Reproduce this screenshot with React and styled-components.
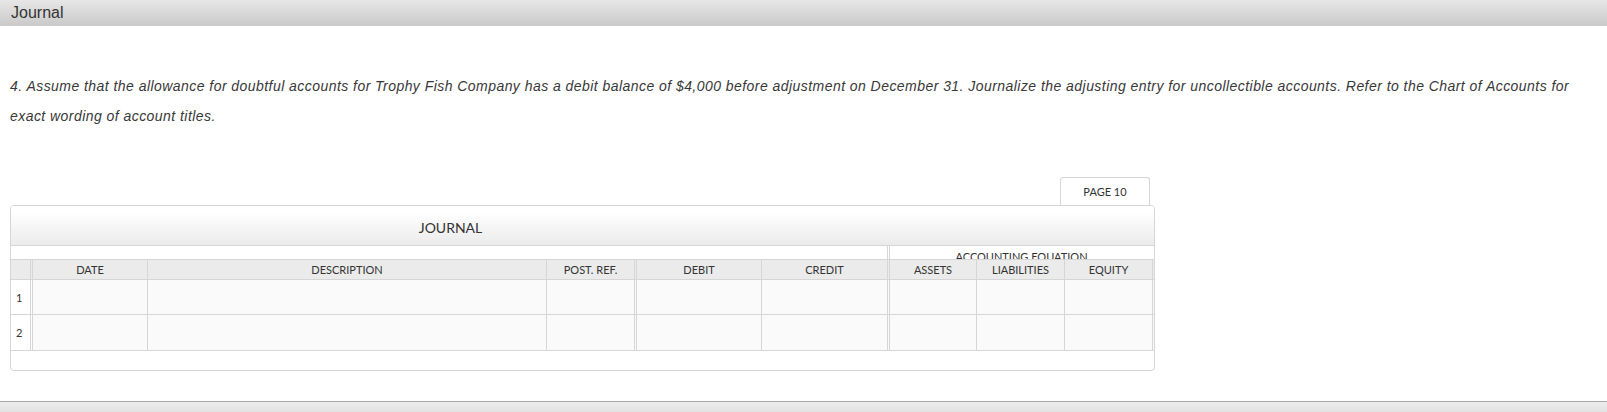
import React from "react";
import styled, { createGlobalStyle } from "styled-components";

const GlobalStyle = createGlobalStyle`
  html, body {
    margin: 0;
    padding: 0;
    background: #ffffff;
  }
  body {
    width: 1607px;
    font-family: "Liberation Sans", Arial, sans-serif;
    color: #333333;
  }
`;

const columns = [
  { key: "num", label: "", width: 22, double: true },
  { key: "date", label: "DATE", width: 115 },
  { key: "desc", label: "DESCRIPTION", width: 399 },
  { key: "post", label: "POST. REF.", width: 90, double: true },
  { key: "debit", label: "DEBIT", width: 125 },
  { key: "credit", label: "CREDIT", width: 128, double: true },
  { key: "assets", label: "ASSETS", width: 87 },
  { key: "liab", label: "LIABILITIES", width: 88 },
  { key: "equity", label: "EQUITY", width: 88 },
];

const gridTemplate = columns.map((c) => `${c.width}px`).join(" ");

//Page chrome
const TopBar = styled.div`
  height: 26px;
  background: linear-gradient(#e7e7e7, #c9c9c9);
  display: flex;
  align-items: center;
  padding-left: 11px;
  font-size: 16px;
  color: #333333;
`;

const Content = styled.div`
  padding: 0 17px 0 10px;
`;

const Question = styled.p`
  margin: 45px 0 0;
  font-size: 14px;
  font-style: italic;
  letter-spacing: 0.45px;
  line-height: 30px;
  color: #383838;
`;

const TabRow = styled.div`
  display: flex;
  justify-content: flex-end;
  width: 1145px;
  margin-top: 46px;
`;

const PageTab = styled.div`
  width: 88px;
  height: 27px;
  margin-right: 5px;
  border: 1px solid #d6d6d6;
  border-bottom: none;
  border-radius: 3px 3px 0 0;
  background: #ffffff;
  display: flex;
  align-items: center;
  justify-content: center;
  font-family: Lato, "Open Sans", sans-serif;
  font-size: 11px;
  color: #333333;
`;

//Journal panel
const Panel = styled.div`
  width: 1143px;
  border: 1px solid #d6d6d6;
  border-radius: 4px;
  overflow: hidden;
  font-family: Lato, "Open Sans", sans-serif;
  color: #333333;
`;

const PanelHeader = styled.div`
  height: 39px;
  border-bottom: 1px solid #d6d6d6;
  background: linear-gradient(#ffffff 15%, #ebebeb);
  display: flex;
  align-items: center;
`;

const PanelTitle = styled.div`
  width: 879px;
  text-align: center;
  font-size: 14px;
  padding-top: 3px;
`;

const SubHeader = styled.div`
  display: flex;
  height: 13px;
`;

const JournalSpacer = styled.div`
  width: 876px;
  border-right: 3px double #d6d6d6;
`;

const EquationTitle = styled.div`
  width: 263px;
  overflow: hidden;
  text-align: center;
  font-size: 11px;
  line-height: 13px;
  padding-top: 4px;
  box-sizing: border-box;
  white-space: nowrap;
`;

const Row = styled.div`
  display: grid;
  grid-template-columns: ${gridTemplate};
  height: ${(p) => p.$height}px;
  border-top: ${(p) => (p.$top ? "1px solid #d6d6d6" : "none")};
  border-bottom: 1px solid #d6d6d6;
  background: ${(p) => (p.$head ? "#ebebeb" : "#fafafa")};
`;

const Cell = styled.div`
  box-sizing: border-box;
  border-right: ${(p) =>
    p.$double ? "3px double #d6d6d6" : "1px solid #d6d6d6"};
  display: flex;
  align-items: center;
  justify-content: ${(p) => (p.$left ? "flex-start" : "center")};
  padding-left: ${(p) => (p.$left ? "5px" : "0")};
  font-size: 11px;
  background: ${(p) => (p.$num ? "#ffffff" : "transparent")};
`;

const PanelFooter = styled.div`
  height: 19px;
`;

const BottomBar = styled.div`
  margin-top: 30px;
  height: 11px;
  border-top: 1px solid #a8a8a8;
  background: linear-gradient(#ededed, #e0e0e0);
`;

export default function App() {
  const rows = [
    { n: 1, height: 34 },
    { n: 2, height: 35 },
  ];

  return (
    <>
      <GlobalStyle />
      <TopBar>Journal</TopBar>
      <Content>
        <Question>
          4. Assume that the allowance for doubtful accounts for Trophy Fish
          Company has a debit balance of $4,000 before adjustment on December
          31. Journalize the adjusting entry for uncollectible accounts. Refer
          to the Chart of Accounts for exact wording of account titles.
        </Question>
        <TabRow>
          <PageTab>PAGE 10</PageTab>
        </TabRow>
        <Panel>
          <PanelHeader>
            <PanelTitle>JOURNAL</PanelTitle>
          </PanelHeader>
          <SubHeader>
            <JournalSpacer />
            <EquationTitle>ACCOUNTING EQUATION</EquationTitle>
          </SubHeader>
          <Row $head $top $height={19}>
            {columns.map((c) => (
              <Cell key={c.key} $double={c.double}>
                {c.label}
              </Cell>
            ))}
          </Row>
          {rows.map((r) => (
            <Row key={r.n} $height={r.height}>
              {columns.map((c) =>
                c.key === "num" ? (
                  <Cell key={c.key} $double $left $num>
                    {r.n}
                  </Cell>
                ) : (
                  <Cell key={c.key} $double={c.double} />
                )
              )}
            </Row>
          ))}
          <PanelFooter />
        </Panel>
      </Content>
      <BottomBar />
    </>
  );
}
